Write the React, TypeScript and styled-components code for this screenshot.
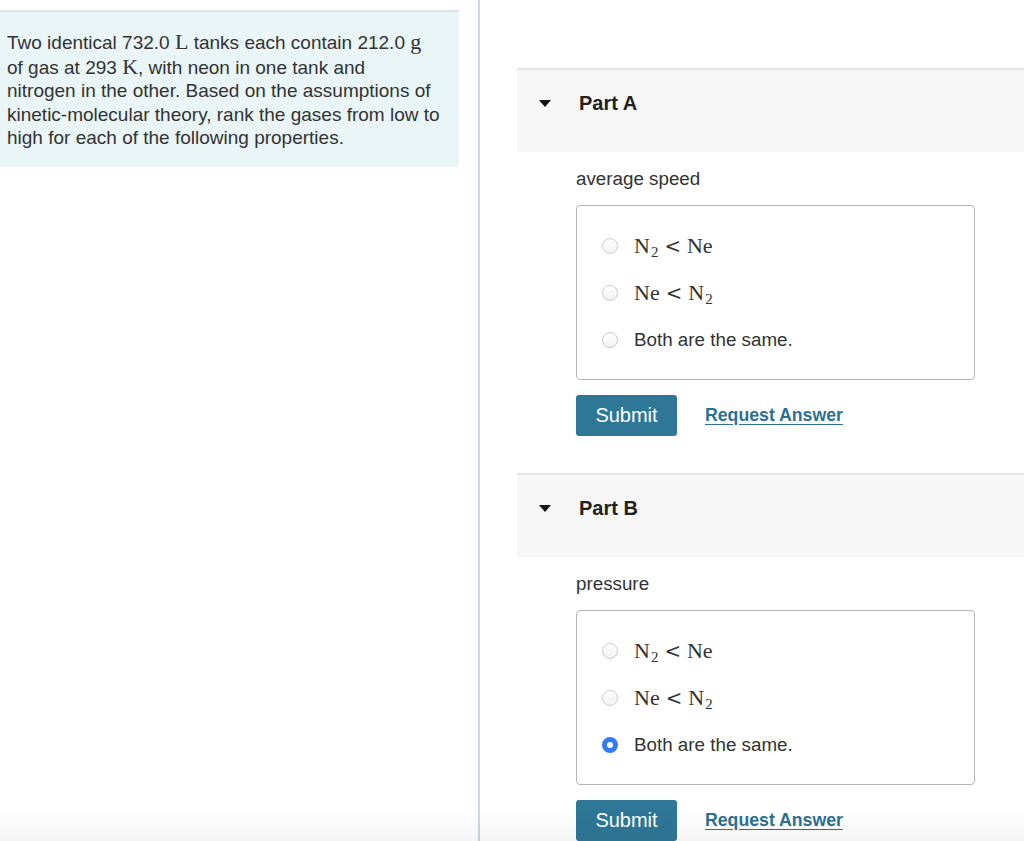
import React from "react";
import styled, { createGlobalStyle } from "styled-components";

const Global = createGlobalStyle`
  html, body { margin: 0; padding: 0; background: #fff; }
  body { font-family: "Liberation Sans", Arial, sans-serif; color: #333; }
`;

const Page = styled.div`
  display: flex;
  min-height: 841px;
  overflow: hidden;
`;

const LeftCol = styled.div`
  width: 478px;
  flex-shrink: 0;
  padding-top: 10px;
`;

const Intro = styled.div`
  width: 459px;
  box-sizing: border-box;
  border-top: 2px solid #e2e4e4;
  background: #e9f5f7;
  padding: 18px 0 17px 7px;
  font-size: 19px;
  line-height: 23.5px;
  white-space: nowrap;
`;

const M = styled.span`
  font-family: "Liberation Serif", "Times New Roman", serif;
  font-size: 22px;
`;

const RightCol = styled.div`
  flex: 1;
  border-left: 2px solid #cbd8ea;
  padding-top: 68px;
`;

const PartHeader = styled.div`
  margin-left: 37px;
  height: 82px;
  border-top: 2px solid #e4e4e4;
  background: #f7f7f7;
  display: flex;
  align-items: flex-start;
  font-weight: bold;
  font-size: 20px;
  color: #222;
  line-height: 66px;
`;

const Caret = styled.span`
  width: 0;
  height: 0;
  border-left: 6px solid transparent;
  border-right: 6px solid transparent;
  border-top: 7px solid #111;
  margin-top: 30px;
  margin-left: 22px;
  margin-right: 28px;
`;

const PartBody = styled.div`
  padding-left: 96px;
  padding-bottom: 37px;
`;

const Prompt = styled.div`
  font-size: 18.8px;
  margin-top: 16px;
  height: 21px;
  line-height: 21px;
`;

const Choices = styled.div`
  margin-top: 16px;
  width: 399px;
  box-sizing: border-box;
  border: 1px solid #b5b5b5;
  border-radius: 4px;
  padding: 16px 0;
`;

const Choice = styled.label`
  display: flex;
  align-items: center;
  height: 47px;
  font-size: 18.8px;
`;

const Radio = styled.span<{ $on?: boolean }>`
  width: 16px;
  height: 16px;
  flex-shrink: 0;
  box-sizing: border-box;
  border-radius: 50%;
  margin-left: 25px;
  margin-right: 16px;
  border: ${(p) => (p.$on ? "5px solid #2f7cf6" : "1px solid #cdcdcd")};
  background: ${(p) => (p.$on ? "#fff" : "linear-gradient(#fff, #f2f2f2)")};
`;

const Sub = styled.sub`
  font-size: 15px;
  vertical-align: -4px;
  line-height: 0;
  margin-left: 1px;
`;

const Rel = styled.span`
  font-family: "DejaVu Serif", serif;
  font-size: 0.9em;
  margin: 0 6px;
`;

const Actions = styled.div`
  display: flex;
  align-items: center;
  margin-top: 15px;
  gap: 28px;
`;

const SubmitBtn = styled.button`
  width: 101px;
  height: 41px;
  border: none;
  border-radius: 3px;
  background: #2f7797;
  color: #fff;
  font-family: "Liberation Sans", Arial, sans-serif;
  font-size: 20px;
  cursor: pointer;
`;

const Link = styled.a`
  color: #2b7194;
  font-weight: bold;
  font-size: 17.7px;
  text-decoration: underline;
  text-underline-offset: 3px;
  cursor: pointer;
`;

const BottomFade = styled.div`
  position: fixed;
  left: 0;
  right: 0;
  bottom: 0;
  height: 30px;
  background: linear-gradient(rgba(0, 0, 0, 0), rgba(0, 0, 0, 0.045));
  pointer-events: none;
`;

const options = (sel: number) =>
  [
    <M>
      N<Sub>2</Sub>
      <Rel>&lt;</Rel>Ne
    </M>,
    <M>
      Ne<Rel>&lt;</Rel>N<Sub>2</Sub>
    </M>,
    <>Both are the same.</>,
  ].map((c, i) => (
    <Choice key={i}>
      <Radio $on={i === sel} />
      {c}
    </Choice>
  ));

function Part({ name, prompt, sel }: { name: string; prompt: string; sel: number }) {
  return (
    <>
      <PartHeader>
        <Caret />
        {name}
      </PartHeader>
      <PartBody>
        <Prompt>{prompt}</Prompt>
        <Choices>{options(sel)}</Choices>
        <Actions>
          <SubmitBtn>Submit</SubmitBtn>
          <Link>Request Answer</Link>
        </Actions>
      </PartBody>
    </>
  );
}

export default function App() {
  return (
    <>
      <Global />
      <Page>
        <LeftCol>
          <Intro>
            Two identical 732.0 <M>L</M> tanks each contain 212.0 <M>g</M>
            <br />
            of gas at 293 <M>K</M>, with neon in one tank and
            <br />
            nitrogen in the other. Based on the assumptions of
            <br />
            kinetic-molecular theory, rank the gases from low to
            <br />
            high for each of the following properties.
          </Intro>
        </LeftCol>
        <RightCol>
          <Part name="Part A" prompt="average speed" sel={-1} />
          <Part name="Part B" prompt="pressure" sel={2} />
        </RightCol>
      </Page>
      <BottomFade />
    </>
  );
}
